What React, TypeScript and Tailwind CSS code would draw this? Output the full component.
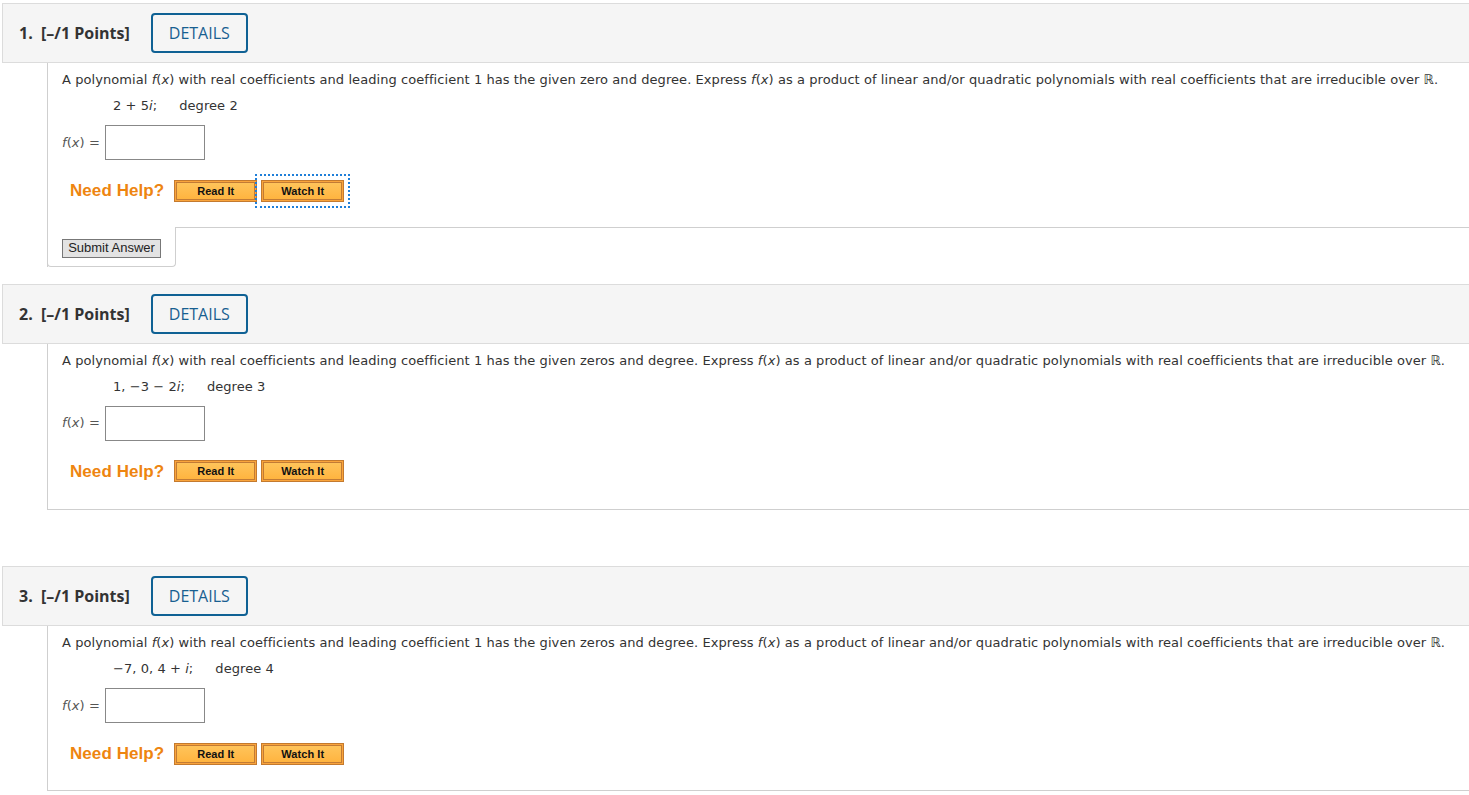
import React from 'react'

const verdana = { fontFamily: '"DejaVu Sans", Verdana, sans-serif' }

function HelpButton({ label, focused }: { label: string; focused?: boolean }) {
  return (
    <span
      className={
        'inline-flex h-[22px] w-[83px] border border-[#c47a2e] bg-[#f9a43c] p-px ' +
        (focused ? 'outline-2 outline-dotted outline-offset-[4px] outline-[#1f7fd9]' : '')
      }
    >
      <span className="flex flex-1 items-center justify-center border border-[#c27b35] bg-gradient-to-b from-[#ffc45a] to-[#ffb43f] font-['Liberation_Sans',Arial,sans-serif] text-[11px] font-bold text-[#111]">
        {label}
      </span>
    </span>
  )
}

function Fx() {
  return (
    <>
      <i>f</i>(<i>x</i>)
    </>
  )
}

type Q = { n: number; zeroNode: React.ReactNode; degree: number; submit?: boolean; last?: boolean }

function Question({ q }: { q: Q }) {
  return (
    <div>
      <div className="flex h-[60px] items-center border border-r-0 border-[#dcdcdc] bg-[#f5f5f5] pl-[16px]">
        <span className="font-['Open_Sans',sans-serif] text-[16px] font-bold text-[#333]">
          {q.n}.&nbsp; [–/1 Points]
        </span>
        <span className="ml-[21px] flex h-[40px] w-[97px] items-center justify-center rounded-[4px] border-2 border-[#0f6194] font-['Open_Sans',sans-serif] text-[16px] font-medium text-[#185f91]">
          DETAILS
        </span>
      </div>
      <div className={'ml-[45px] border-l border-[#cfcfcf] ' + (q.submit ? '' : 'border-b')}>
        <div className="pl-[14px] text-[13px] tracking-[0.07px] text-[#333]" style={verdana}>
          <div className="pt-[8px] leading-[18px]">
            A polynomial <Fx /> with real coefficients and leading coefficient 1 has the given{' '}
            {q.n === 1 ? 'zero' : 'zeros'} and degree. Express <Fx /> as a product of linear and/or quadratic
            polynomials with real coefficients that are irreducible over ℝ.
          </div>
          <div className="mt-[8px] pl-[51px] leading-[18px]">
            {q.zeroNode}
            <span className="ml-[22px]">degree {q.degree}</span>
          </div>
          <div className="mt-[10px] flex items-center">
            <span className="text-[#555]">
              <Fx /> =
            </span>
            <span className="ml-[5px] h-[35px] w-[100px] border border-[#888] bg-white" />
          </div>
          <div className="mt-[18px] flex items-center">
            <span className="ml-[8px] font-['Liberation_Sans',Arial,sans-serif] text-[17px] font-bold text-[#ee8510]">
              Need Help?
            </span>
            <span className="ml-[10px] flex gap-[4px]">
              <HelpButton label="Read It" />
              <HelpButton label="Watch It" focused={q.submit} />
            </span>
          </div>
          <div className={q.submit ? 'h-[23px]' : q.last ? 'h-[23px]' : 'h-[25px]'} />
        </div>
        {q.submit && (
          <div className="-ml-px flex">
            <div className="flex h-[40px] w-[129px] items-start rounded-b-[4px] border border-t-0 border-[#cfcfcf] pl-[14px] pt-[12px]">
              <span className="flex h-[19px] w-[99px] items-center justify-center border border-[#777] bg-[#e3e3e3] font-['Liberation_Sans',Arial,sans-serif] text-[13px] text-[#222]">
                Submit Answer
              </span>
            </div>
            <div className="flex-1 border-t border-[#cfcfcf]" />
          </div>
        )}
      </div>
    </div>
  )
}

const questions: Q[] = [
  {
    n: 1,
    zeroNode: (
      <span>
        2 + 5<i>i</i>;
      </span>
    ),
    degree: 2,
    submit: true,
  },
  {
    n: 2,
    zeroNode: (
      <span>
        1, −3 − 2<i>i</i>;
      </span>
    ),
    degree: 3,
  },
  {
    n: 3,
    zeroNode: (
      <span>
        −7, 0, 4 + <i>i</i>;
      </span>
    ),
    degree: 4,
    last: true,
  },
]

export default function App() {
  return (
    <div className="min-h-screen bg-white pl-[2px] pt-[3px]">
      <Question q={questions[0]} />
      <div className="h-[17px]" />
      <Question q={questions[1]} />
      <div className="h-[56px]" />
      <Question q={questions[2]} />
    </div>
  )
}
